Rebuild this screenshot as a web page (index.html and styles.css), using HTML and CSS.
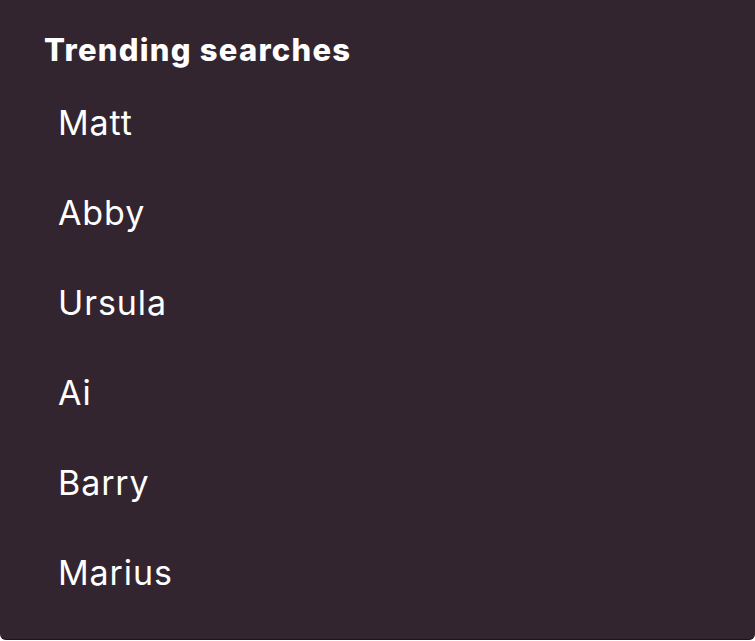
FILE: index.html
```html
<!DOCTYPE html>
<html>
<head>
<meta charset="utf-8">
<link rel="stylesheet" href="styles.css">
</head>
<body>
<div class="panel">
  <h2 class="title">Trending searches</h2>
  <ul class="list">
    <li class="item">Matt</li>
    <li class="item">Abby</li>
    <li class="item">Ursula</li>
    <li class="item">Ai</li>
    <li class="item">Barry</li>
    <li class="item">Marius</li>
  </ul>
</div>
</body>
</html>
```
FILE: styles.css
```css
html, body {
  margin: 0;
  padding: 0;
  background: #ffffff;
}
body {
  font-family: Inter, Roboto, "Liberation Sans", sans-serif;
}
.panel {
  box-sizing: border-box;
  width: 755px;
  height: 640px;
  background: #33252f;
  border-bottom: 1px solid #1e151b;
  border-radius: 0 0 6px 6px;
  padding: 30px 0 0 44px;
  color: #ffffff;
}
.title {
  margin: 0;
  font-size: 31px;
  font-weight: 800;
  letter-spacing: 1.25px;
  line-height: 40px;
  height: 48px;
}
.list {
  list-style: none;
  margin: 0;
  padding: 0 0 0 14px;
  display: flex;
  flex-direction: column;
}
.item {
  height: 90px;
  line-height: 90px;
  font-size: 34px;
  font-weight: 400;
  letter-spacing: 0.9px;
}
```
